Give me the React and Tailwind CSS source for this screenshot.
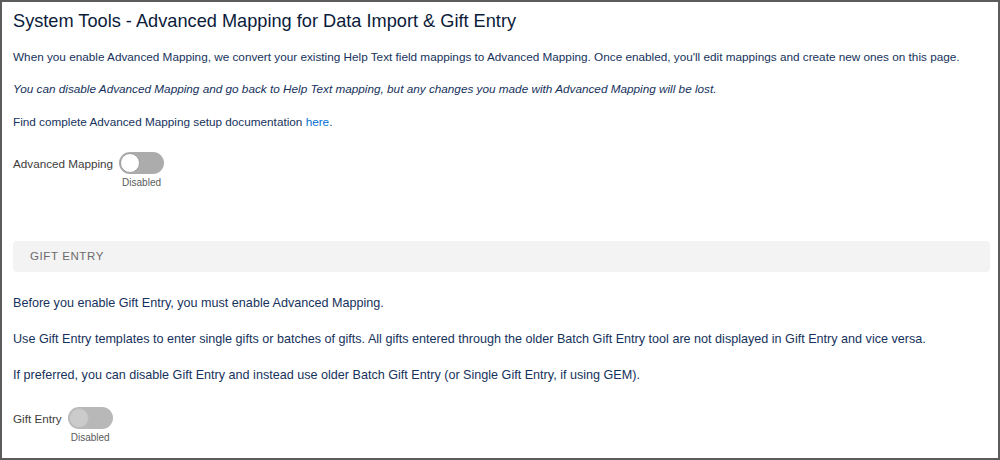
import React from 'react';

const Toggle = ({ label, disabled }) => (
  <div className="flex items-start">
    <span className="text-[11.7px] text-[#3e3e3c] mt-[3px] mr-[6px]">{label}</span>
    <div className="flex flex-col items-center">
      <div
        className={`w-[45px] h-[22px] rounded-full p-[1px] flex items-center ${
          disabled ? 'bg-[#b8b8b8]' : 'bg-[#acacac]'
        }`}
      >
        <div
          className={`w-[20px] h-[20px] rounded-full border ${
            disabled ? 'bg-[#cbcbcb] border-[#bdbdbd]' : 'bg-white border-[#9e9e9e]'
          }`}
        />
      </div>
      <span className="text-[10px] text-[#5a5a5a] mt-[2px] leading-[14px]">Disabled</span>
    </div>
  </div>
);

export default function App() {
  return (
    <div
      className="w-[1000px] h-[460px] border-2 border-[#5c5c5c] bg-white overflow-hidden text-[#16325c]"
      style={{ fontFamily: '"Liberation Sans", Arial, sans-serif' }}
    >
      <div className="px-[11px] pt-[7px]">
        <h1 className="text-[18.2px] leading-[24px] text-[#0b1b3a]">
          System Tools - Advanced Mapping for Data Import &amp; Gift Entry
        </h1>
        <p className="text-[11.75px] leading-[16px] mt-[16px]">
          When you enable Advanced Mapping, we convert your existing Help Text field mappings to Advanced Mapping. Once enabled, you'll edit mappings and create new ones on this page.
        </p>
        <p className="text-[11.75px] leading-[16px] mt-[16px] italic">
          You can disable Advanced Mapping and go back to Help Text mapping, but any changes you made with Advanced Mapping will be lost.
        </p>
        <p className="text-[11.75px] leading-[16px] mt-[17px]">
          Find complete Advanced Mapping setup documentation <span className="text-[#0070d2]">here</span>.
        </p>
        <div className="mt-[22px]">
          <Toggle label="Advanced Mapping" />
        </div>

        <div className="mt-[51px] h-[31px] bg-[#f3f3f3] rounded-[4px] mr-[-3px] flex items-center px-[17px]">
          <span className="text-[11.5px] tracking-[0.6px] text-[#6b6b6b] uppercase">Gift Entry</span>
        </div>

        <p className="text-[12.6px] leading-[18px] mt-[22px]">
          Before you enable Gift Entry, you must enable Advanced Mapping.
        </p>
        <p className="text-[12.6px] leading-[18px] mt-[18px]">
          Use Gift Entry templates to enter single gifts or batches of gifts. All gifts entered through the older Batch Gift Entry tool are not displayed in Gift Entry and vice versa.
        </p>
        <p className="text-[12.6px] leading-[18px] mt-[18px]">
          If preferred, you can disable Gift Entry and instead use older Batch Gift Entry (or Single Gift Entry, if using GEM).
        </p>
        <div className="mt-[23px]">
          <Toggle label="Gift Entry" disabled />
        </div>
      </div>
    </div>
  );
}
